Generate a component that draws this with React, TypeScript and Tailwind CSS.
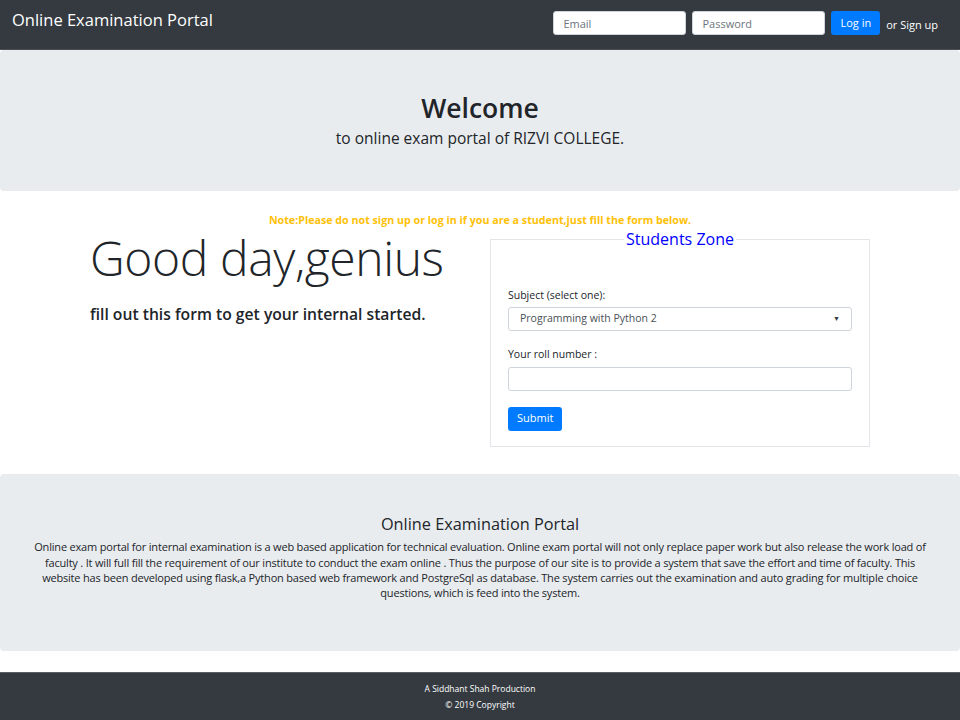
import React from 'react';

export default function App() {
  return (
    <div className="min-h-screen w-full bg-white text-[#212529]" style={{ fontFamily: '"Open Sans", "Noto Sans", sans-serif' }}>
      {/* Navbar */}
      <nav className="h-[50px] bg-[#343a40] flex items-center justify-between pl-3 pr-[22px] border-b border-[#4b5056]">
        <span className="text-white text-[16.5px] leading-none -mt-[8px]">Online Examination Portal</span>
        <div className="flex items-center gap-[6px] -mt-[3px]">
          <input
            className="w-[133px] h-[24px] rounded-[3px] bg-white px-[9px] text-[11px] text-[#495057] placeholder-[#6c757d] outline-none border border-[#ced4da]"
            placeholder="Email"
          />
          <input
            className="w-[133px] h-[24px] rounded-[3px] bg-white px-[9px] text-[11px] text-[#495057] placeholder-[#6c757d] outline-none border border-[#ced4da]"
            placeholder="Password"
          />
          <button className="h-[24px] px-[9px] rounded-[3px] bg-[#007bff] text-white text-[11px]">Log in</button>
          <span className="text-white text-[11px] mt-[4px]">or Sign up</span>
        </div>
      </nav>

      {/* Jumbotron */}
      <div className="h-[141px] bg-[#e9ecef] rounded-[4px] flex flex-col items-center justify-center">
        <h1 className="text-[26.5px] font-semibold leading-tight">Welcome</h1>
        <p className="text-[15.5px] font-medium leading-tight mt-[4px]">to online exam portal of RIZVI COLLEGE.</p>
      </div>

      {/* Main */}
      <div className="pt-[24px] h-[283px]">
        <p className="text-center text-[#ffc107] text-[10.7px] font-bold leading-none">
          Note:Please do not sign up or log in if you are a student,just fill the form below.
        </p>
        <div className="flex mt-[7px]">
          <div className="w-[490px] pl-[90px] pt-[1px]">
            <h2 className="text-[48px] font-light leading-none tracking-[-0.4px] text-[#212529]">Good day,genius</h2>
            <p className="text-[15.7px] font-semibold mt-[25px] leading-none">fill out this form to get your internal started.</p>
          </div>
          <div className="w-[380px] relative mt-[6px]">
            <div className="border border-[#e3e5e8] h-[208px] px-[17px] pt-[50px]">
              <span className="absolute -top-[8px] left-0 right-0 text-center text-[16px] leading-none text-[#0000ff]">
                <span className="bg-white px-[2px]">Students Zone</span>
              </span>
              <label className="block text-[10.5px] leading-none">Subject (select one):</label>
              <div className="mt-[7px] h-[24px] border border-[#ced4da] rounded-[3px] flex items-center justify-between px-[11px] text-[10.5px] text-[#495057]">
                <span>Programming with Python 2</span>
                <span className="text-[7px] text-[#343a40]">▼</span>
              </div>
              <label className="block text-[10.5px] leading-none mt-[18px]">Your roll number :</label>
              <div className="mt-[7px] h-[24px] border border-[#ced4da] rounded-[3px]"></div>
              <button className="mt-[16px] h-[24px] px-[9px] rounded-[3px] bg-[#007bff] text-white text-[11px]">Submit</button>
            </div>
          </div>
        </div>
      </div>

      {/* About */}
      <div className="h-[177px] bg-[#e9ecef] rounded-[4px] flex flex-col items-center pt-[42px] px-[20px]">
        <h3 className="text-[16.3px] font-medium leading-none">Online Examination Portal</h3>
        <p className="text-[11px] text-center leading-[15.3px] text-[#212529] mt-[7px] tracking-[-0.19px]">
          Online exam portal for internal examination is a web based application for technical evaluation. Online exam portal will not only replace paper work but also release the work load of
          <br />
          faculty . It will full fill the requirement of our institute to conduct the exam online . Thus the purpose of our site is to provide a system that save the effort and time of faculty. This
          <br />
          website has been developed using flask,a Python based web framework and PostgreSql as database. The system carries out the examination and auto grading for multiple choice
          <br />
          questions, which is feed into the system.
        </p>
      </div>

      {/* Footer */}
      <footer className="mt-[21px] h-[48px] bg-[#343a40] border-t border-[#5a5f64] flex flex-col items-center justify-center text-white text-[8.5px] leading-[16px]">
        <span>A Siddhant Shah Production</span>
        <span>© 2019 Copyright</span>
      </footer>
    </div>
  );
}
